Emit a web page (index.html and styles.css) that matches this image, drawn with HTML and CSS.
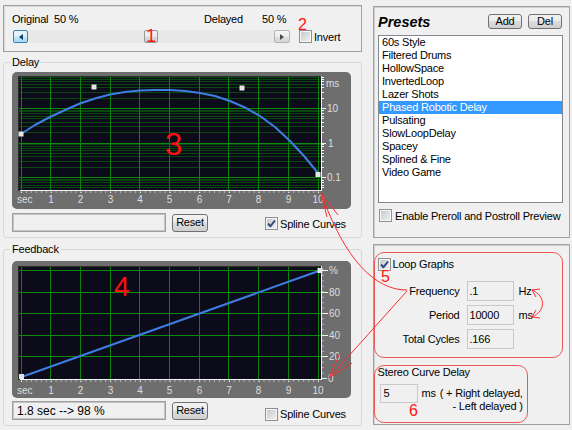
FILE: index.html
```html
<!DOCTYPE html>
<html>
<head>
<meta charset="utf-8">
<title>Delay</title>
<link rel="stylesheet" href="styles.css">
</head>
<body>
<div class="app">
  <div class="left">
    <div class="mixbox">
      <div class="mixrow">
        <span class="m-orig">Original</span><span class="m-ov">50 %</span><span class="m-del">Delayed</span><span>50 %</span>
      </div>
      <div class="sliderrow">
        <div class="scrollbar">
          <div class="sb-btn sb-left"><span class="tri-left"></span></div>
          <div class="sb-track"><div class="sb-thumb"></div></div>
          <div class="sb-btn sb-right"><span class="tri-right"></span></div>
        </div>
        <div class="check invert"><span class="cb"></span><span>Invert</span></div>
      </div>
      <span class="anno anno-1">1</span>
      <span class="anno anno-2">2</span>
    </div>

    <div class="group group-delay">
      <div class="group-title">Delay</div>
      <svg class="graph" width="339" height="137" viewBox="0 0 339 137">
        <rect class="g-panel" x="0" y="0" width="339" height="137" rx="5"/>
        <rect class="g-plot" x="6.5" y="4.5" width="303" height="114"/>
        <g class="g-minor">
          <line x1="7" x2="309" y1="5.5" y2="5.5"/><line x1="7" x2="309" y1="7.5" y2="7.5"/><line x1="7" x2="309" y1="9.5" y2="9.5"/><line x1="7" x2="309" y1="12.5" y2="12.5"/><line x1="7" x2="309" y1="15.5" y2="15.5"/><line x1="7" x2="309" y1="20.5" y2="20.5"/><line x1="7" x2="309" y1="26.5" y2="26.5"/>
          <line x1="7" x2="309" y1="38.5" y2="38.5"/><line x1="7" x2="309" y1="39.5" y2="39.5"/><line x1="7" x2="309" y1="41.5" y2="41.5"/><line x1="7" x2="309" y1="44.5" y2="44.5"/><line x1="7" x2="309" y1="46.5" y2="46.5"/><line x1="7" x2="309" y1="50.5" y2="50.5"/><line x1="7" x2="309" y1="54.5" y2="54.5"/><line x1="7" x2="309" y1="60.5" y2="60.5"/>
          <line x1="7" x2="309" y1="72.5" y2="72.5"/><line x1="7" x2="309" y1="74.5" y2="74.5"/><line x1="7" x2="309" y1="76.5" y2="76.5"/><line x1="7" x2="309" y1="78.5" y2="78.5"/><line x1="7" x2="309" y1="81.5" y2="81.5"/><line x1="7" x2="309" y1="84.5" y2="84.5"/><line x1="7" x2="309" y1="89.5" y2="89.5"/><line x1="7" x2="309" y1="95.5" y2="95.5"/>
          <line x1="7" x2="309" y1="107.5" y2="107.5"/><line x1="7" x2="309" y1="108.5" y2="108.5"/><line x1="7" x2="309" y1="110.5" y2="110.5"/><line x1="7" x2="309" y1="113.5" y2="113.5"/><line x1="7" x2="309" y1="115.5" y2="115.5"/>
        </g>
        <g class="g-major">
          <line x1="7" x2="309" y1="36.5" y2="36.5"/><line x1="7" x2="309" y1="71.5" y2="71.5"/><line x1="7" x2="309" y1="105.5" y2="105.5"/>
        </g>
        <g class="g-v">
          <line x1="9.5" x2="9.5" y1="5" y2="118"/><line x1="38.5" x2="38.5" y1="5" y2="118"/><line x1="68.5" x2="68.5" y1="5" y2="118"/><line x1="98.5" x2="98.5" y1="5" y2="118"/><line x1="127.5" x2="127.5" y1="5" y2="118"/><line x1="157.5" x2="157.5" y1="5" y2="118"/><line x1="187.5" x2="187.5" y1="5" y2="118"/><line x1="216.5" x2="216.5" y1="5" y2="118"/><line x1="246.5" x2="246.5" y1="5" y2="118"/><line x1="276.5" x2="276.5" y1="5" y2="118"/><line x1="306.5" x2="306.5" y1="5" y2="118"/>
        </g>
        <line class="g-axis" x1="8" y1="118.5" x2="310" y2="118.5"/>
        <line class="g-axis" x1="309.5" y1="4" x2="309.5" y2="119"/>
        <line class="g-axis" x1="9" y1="120" x2="307" y2="120" stroke-width="3" stroke-dasharray="1 3.95"/>
        <line class="g-axis" x1="9" y1="120.5" x2="307" y2="120.5" stroke-width="5" stroke-dasharray="1 28.7"/>
        <path class="g-axis" d="M310 5.5h2M310 7.5h2M310 9.5h2M310 12.5h2M310 15.5h2M310 20.5h2M310 26.5h2M310 38.5h2M310 41.5h2M310 44.5h2M310 46.5h2M310 50.5h2M310 54.5h2M310 60.5h2M310 72.5h2M310 74.5h2M310 78.5h2M310 81.5h2M310 84.5h2M310 89.5h2M310 95.5h2M310 108.5h2M310 110.5h2M310 113.5h2M310 115.5h2M310 36.5h4M310 71.5h4M310 105.5h4"/>
        <text class="g-lbl" x="5" y="131">sec</text>
        <g class="g-lbl g-mid">
          <text x="39" y="131">1</text><text x="68.5" y="131">2</text><text x="98.5" y="131">3</text><text x="128" y="131">4</text><text x="157.5" y="131">5</text><text x="187.5" y="131">6</text><text x="217" y="131">7</text><text x="246.5" y="131">8</text><text x="276.5" y="131">9</text><text x="306" y="131">10</text>
        </g>
        <text class="g-lbl" x="314" y="15">ms</text>
        <text class="g-lbl" x="315" y="40">10</text>
        <text class="g-lbl" x="316" y="75">1</text>
        <text class="g-lbl" x="315" y="109">0.1</text>
        <polyline class="g-curve" points="9,62 23,53 38,45 53,38 68,31.5 83,26.5 98,22.5 113,20 128,18.5 143,18 158,18 173,19 188,21 203,24 218,29 233,35.5 248,44 263,55 278,69 292,84 306,101"/>
        <rect class="g-pt" x="6.5" y="59.5" width="5" height="5"/>
        <rect class="g-pt" x="79.5" y="12.5" width="5" height="5"/>
        <rect class="g-pt" x="227.5" y="13.5" width="5" height="5"/>
        <rect class="g-pt" x="303.5" y="100" width="5" height="5"/>
        <text class="g-num g-num3" x="153" y="83">3</text>
      </svg>
      <div class="ctrlrow">
        <div class="textbox"></div>
        <div class="button">Reset</div>
        <div class="check spline"><span class="cb"><svg class="tick" width="11" height="11" viewBox="0 0 11 11"><path d="M2 5.5 L4.5 8.2 L9 2.5"/></svg></span><span>Spline Curves</span></div>
      </div>
    </div>

    <div class="group group-feedback">
      <div class="group-title">Feedback</div>
      <svg class="graph" width="339" height="137" viewBox="0 0 339 137">
        <rect class="g-panel" x="0" y="0" width="339" height="137" rx="5"/>
        <rect class="g-plot" x="6.5" y="5.5" width="303" height="113"/>
        <g class="g-major">
          <line x1="7" x2="309" y1="9.5" y2="9.5"/><line x1="7" x2="309" y1="31.5" y2="31.5"/><line x1="7" x2="309" y1="52.5" y2="52.5"/><line x1="7" x2="309" y1="74.5" y2="74.5"/><line x1="7" x2="309" y1="95.5" y2="95.5"/>
        </g>
        <g class="g-v">
          <line x1="9.5" x2="9.5" y1="6" y2="118"/><line x1="38.5" x2="38.5" y1="6" y2="118"/><line x1="68.5" x2="68.5" y1="6" y2="118"/><line x1="98.5" x2="98.5" y1="6" y2="118"/><line x1="127.5" x2="127.5" y1="6" y2="118"/><line x1="157.5" x2="157.5" y1="6" y2="118"/><line x1="187.5" x2="187.5" y1="6" y2="118"/><line x1="216.5" x2="216.5" y1="6" y2="118"/><line x1="246.5" x2="246.5" y1="6" y2="118"/><line x1="276.5" x2="276.5" y1="6" y2="118"/><line x1="306.5" x2="306.5" y1="6" y2="118"/>
        </g>
        <line class="g-axis" x1="8" y1="118.5" x2="310" y2="118.5"/>
        <line class="g-axis" x1="309.5" y1="5" x2="309.5" y2="119"/>
        <line class="g-axis" x1="9" y1="120" x2="307" y2="120" stroke-width="3" stroke-dasharray="1 3.95"/>
        <line class="g-axis" x1="9" y1="120.5" x2="307" y2="120.5" stroke-width="5" stroke-dasharray="1 28.7"/>
        <line class="g-axis" x1="311" y1="118" x2="311" y2="6" stroke-width="2" stroke-dasharray="1 4.42"/>
        <path class="g-axis" d="M310 9.5h6M310 31.5h6M310 52.5h6M310 74.5h6M310 95.5h6M310 117.5h5"/>
        <text class="g-lbl" x="5" y="133">sec</text>
        <g class="g-lbl g-mid">
          <text x="39" y="133">1</text><text x="68.5" y="133">2</text><text x="98.5" y="133">3</text><text x="128" y="133">4</text><text x="157.5" y="133">5</text><text x="187.5" y="133">6</text><text x="217" y="133">7</text><text x="246.5" y="133">8</text><text x="276.5" y="133">9</text><text x="306" y="133">10</text>
        </g>
        <text class="g-lbl" x="317" y="13">%</text>
        <text class="g-lbl" x="317" y="35">80</text>
        <text class="g-lbl" x="317" y="56">60</text>
        <text class="g-lbl" x="317" y="78">40</text>
        <text class="g-lbl" x="317" y="99">20</text>
        <text class="g-lbl" x="316" y="121">0</text>
        <line class="g-curve" x1="9.5" y1="116" x2="308" y2="9.5"/>
        <rect class="g-pt" x="7" y="113" width="5" height="5"/>
        <rect class="g-pt" x="305.5" y="7" width="5" height="5"/>
        <text class="g-num g-num4" x="102" y="35">4</text>
      </svg>
      <div class="ctrlrow">
        <div class="textbox">1.8 sec --&gt; 98 %</div>
        <div class="button">Reset</div>
        <div class="check spline spline-low"><span class="cb"></span><span>Spline Curves</span></div>
      </div>
    </div>
  </div>

  <div class="right">
    <div class="panel presets">
      <div class="p-head">
        <span class="p-title">Presets</span>
        <div class="button btn-small btn-add">Add</div>
        <div class="button btn-small btn-del">Del</div>
      </div>
      <div class="listbox">
        <div class="item">60s Style</div>
        <div class="item">Filtered Drums</div>
        <div class="item">HollowSpace</div>
        <div class="item">InvertedLoop</div>
        <div class="item">Lazer Shots</div>
        <div class="item sel">Phased Robotic Delay</div>
        <div class="item">Pulsating</div>
        <div class="item">SlowLoopDelay</div>
        <div class="item">Spacey</div>
        <div class="item">Splined &amp; Fine</div>
        <div class="item">Video Game</div>
      </div>
      <div class="check preroll"><span class="cb"></span><span>Enable Preroll and Postroll Preview</span></div>
    </div>

    <div class="panel loop">
      <div class="redbox r5">
        <div class="check loopcheck"><span class="cb"><svg class="tick" width="11" height="11" viewBox="0 0 11 11"><path d="M2 5.5 L4.5 8.2 L9 2.5"/></svg></span><span>Loop Graphs</span></div>
        <div class="loop-grid">
          <span class="lg-label">Frequency</span><div class="field">.1</div><span class="lg-unit">Hz</span>
          <span class="lg-label">Period</span><div class="field">10000</div><span class="lg-unit">ms</span>
          <span class="lg-label">Total Cycles</span><div class="field">.166</div><span class="lg-unit"></span>
        </div>
        <span class="anno anno-5">5</span>
      </div>
      <div class="redbox r6">
        <div class="sc-title">Stereo Curve Delay</div>
        <div class="sc-row">
          <div class="field sc-field">5</div>
          <span class="sc-ms">ms</span>
          <div class="sc-note">( + Right delayed,<br>- Left delayed )</div>
        </div>
        <span class="anno anno-6">6</span>
      </div>
    </div>
  </div>

  <svg class="overlay" width="572" height="430" viewBox="0 0 572 430">
    <path class="ann" d="M407,290 C375,290 345,260 321,193 M321,193 L338,215 M321,193 L327,217 M407,291 L329,378 M329,378 L340,353 M329,378 L352,363 M532,290 C546,296 546,311 532,317 M532,290 L540,289 M532,290 L536,297 M532,317 L540,318 M532,317 L536,310"/>
  </svg>
</div>
</body>
</html>
```
FILE: styles.css
```css
* { box-sizing: border-box; }
html, body { margin: 0; padding: 0; }
body {
  background: #f0f0f0;
  font-family: "Liberation Sans", Arial, sans-serif;
  font-size: 11px;
  letter-spacing: -0.2px;
  color: #000;
}
.app {
  position: relative;
  width: 572px;
  height: 430px;
  display: flex;
  overflow: hidden;
}
.left {
  margin-left: 3px;
  width: 359px;
  display: flex;
  flex-direction: column;
}
.right {
  margin-left: 11px;
  width: 197px;
  display: flex;
  flex-direction: column;
}

/* mix box */
.mixbox {
  position: relative;
  margin-top: 5px;
  height: 47px;
  border: 1px solid #a0a0a0;
  box-shadow: inset 1px 1px 0 #d8d8d8;
  padding: 7px 0 0 8px;
}
.mixrow { display: flex; height: 13px; line-height: 13px; white-space: nowrap; }
.m-orig { width: 42px; }
.m-ov { width: 150px; }
.m-del { width: 58px; }
.sliderrow {
  display: flex;
  align-items: center;
  height: 13px;
  margin-top: 4px;
  margin-left: 1px;
}
.scrollbar { display: flex; width: 277px; height: 13px; }
.sb-btn {
  height: 13px;
  border-radius: 2px;
  display: flex;
  align-items: center;
  justify-content: center;
}
.sb-left {
  width: 15px;
  border: 1px solid #3c7fb1;
  background: linear-gradient(#eaf6fd, #d9f0fc 50%, #bee6fd 51%, #a7d9f5);
}
.sb-right {
  width: 16px;
  border: 1px solid #b4b4b4;
  background: linear-gradient(#f6f6f6, #ececec 50%, #dedede 51%, #d4d4d4);
}
.tri-left {
  width: 0; height: 0;
  border-top: 3.5px solid transparent;
  border-bottom: 3.5px solid transparent;
  border-right: 4px solid #1d3b63;
}
.tri-right {
  width: 0; height: 0;
  border-top: 3.5px solid transparent;
  border-bottom: 3.5px solid transparent;
  border-left: 4px solid #4a4a4a;
}
.sb-track { flex: 1; background: #e8e8e8; display: flex; }
.sb-thumb {
  width: 14px;
  height: 13px;
  margin-left: 116px;
  border: 1px solid #979797;
  border-radius: 2px;
  background: linear-gradient(#f4f4f4, #eaeaea 50%, #dcdcdc 51%, #cfcfcf);
}
.invert { margin-left: 9px; }

.anno {
  position: absolute;
  color: #ff1414;
  letter-spacing: 0;
  font-family: "Liberation Sans", Arial, sans-serif;
}
.anno-1 { font-size: 18px; line-height: 18px; left: 142px; top: 21px; }
.anno-2 { font-size: 16px; line-height: 16px; left: 294px; top: 11px; }
.anno-5 { font-size: 16px; line-height: 16px; left: 6px; top: 15.5px; }
.anno-6 { font-size: 16px; line-height: 16px; left: 34px; top: 36.5px; }

/* check boxes */
.check { display: flex; align-items: center; gap: 2px; white-space: nowrap; }
.cb {
  flex: none;
  width: 13px;
  height: 13px;
  border: 1px solid #8e8f8f;
  background: linear-gradient(135deg, #c3c7cb, #f2f2f2);
  box-shadow: inset 0 0 0 1px #f7f7f7;
  display: flex;
  align-items: center;
  justify-content: center;
}
.tick path { fill: none; stroke: #34497d; stroke-width: 2; stroke-linejoin: round; }

/* groups */
.group {
  border: 1px solid #d5d9dc;
  border-radius: 3px;
}
.group-delay { margin-top: 10px; height: 176px; }
.group-feedback { margin-top: 11px; height: 177px; }
.group-title {
  margin: -7px 0 0 6px;
  padding: 0 2px;
  width: max-content;
  height: 13px;
  line-height: 13px;
  background: #f0f0f0;
}
.graph { display: block; margin-left: 8px; }
.group-delay .graph { margin-top: 3px; }
.group-feedback .graph { margin-top: 5px; }
.ctrlrow {
  display: flex;
  align-items: center;
  height: 19px;
  margin-left: 8px;
}
.group-delay .ctrlrow { margin-top: 4px; }
.group-feedback .ctrlrow { margin-top: 3px; }
.textbox {
  width: 154px;
  height: 19px;
  border: 1px solid #a0a0a0;
  box-shadow: inset 0 0 0 1px #c4c4c4;
  font-size: 12px;
  letter-spacing: 0;
  line-height: 15px;
  padding: 2px 0 0 4px;
  white-space: nowrap;
}
.button {
  width: 36px;
  height: 18px;
  margin-left: 6px;
  border: 1px solid #707070;
  border-radius: 3px;
  background: linear-gradient(#f3f3f3, #ebebeb 45%, #dddddd 50%, #cfcfcf);
  display: flex;
  align-items: center;
  justify-content: center;
  line-height: 1;
}
.spline { margin-left: 57px; margin-top: 2px; }
.spline-low { margin-top: 7px; }

/* graph svg */
.g-panel { fill: #6e6e6e; }
.g-plot { fill: #0b0b1a; stroke: #2a2a2a; stroke-width: 1; }
.g-minor line { stroke: #0b4510; stroke-width: 1; shape-rendering: crispEdges; }
.g-major line { stroke: #0b8a0b; stroke-width: 1; shape-rendering: crispEdges; }
.g-v line { stroke: #0b820b; stroke-width: 1; shape-rendering: crispEdges; }
.g-axis { stroke: #f2f2f2; fill: none; stroke-width: 1; }
.g-lbl { fill: #dedede; font-size: 10px; letter-spacing: 0; font-family: "Liberation Sans", Arial, sans-serif; }
.g-mid { text-anchor: middle; }
.g-curve { fill: none; stroke: #3f7de2; stroke-width: 2; stroke-linejoin: round; stroke-linecap: round; }
.g-pt { fill: #e4e4e4; }
.g-num { fill: #ff1010; font-family: "Liberation Sans", Arial, sans-serif; letter-spacing: 0; }
.g-num3 { font-size: 31px; }
.g-num4 { font-size: 28px; }

/* right panels */
.panel {
  border: 1px solid #a0a0a0;
  box-shadow: inset 1px 1px 0 #d0d0d0;
}
.presets {
  margin-top: 6px;
  height: 232px;
  padding: 7px 7px 0 4px;
}
.p-head { display: flex; height: 15px; align-items: flex-start; }
.p-title {
  font-weight: bold;
  font-style: italic;
  font-size: 14.5px;
  line-height: 16px;
  letter-spacing: 0;
}
.btn-small { width: 34px; height: 15px; }
.btn-add { margin-left: auto; }
.btn-del { margin-left: 6px; }
.listbox {
  margin-top: 6px;
  width: 185px;
  height: 168px;
  border: 1px solid #828790;
  background: #fff;
  overflow: hidden;
}
.item {
  height: 13px;
  line-height: 13px;
  padding-left: 3px;
  white-space: nowrap;
}
.item.sel { background: #3399ff; color: #fff; }
.preroll { margin-top: 6px; margin-left: 1px; gap: 3px; }

.loop {
  margin-top: 6px;
  height: 181px;
  padding-top: 7px;
}
.redbox {
  position: relative;
  border: 1.5px solid #ee5757;
  border-radius: 10px;
}
.r5 { width: 189px; height: 106px; padding: 4.5px 0 0 2.5px; }
.loopcheck { height: 13px; }
.loop-grid {
  display: grid;
  grid-template-columns: 84px 47px auto;
  grid-auto-rows: 20px;
  column-gap: 5px;
  row-gap: 4px;
  margin-top: 10px;
}
.lg-label { text-align: right; align-self: center; padding-right: 2px; white-space: nowrap; }
.lg-unit { align-self: center; }
.field {
  height: 20px;
  border: 1px solid #c9c9c9;
  background: #f0f0f0;
  padding-left: 2px;
  line-height: 18px;
  white-space: nowrap;
}
.r6 { margin-top: 7px; width: 154px; height: 58px; padding: 0 0 0 2.5px; }
.sc-title { line-height: 13px; white-space: nowrap; }
.sc-row { display: flex; align-items: flex-start; margin-top: 4.5px; }
.sc-field { width: 38px; height: 19px; margin-left: 2px; line-height: 17px; padding-left: 3px; }
.sc-ms { margin: 3.5px 0 0 4px; line-height: 13px; }
.sc-note { margin: 3.5px 0 0 4px; line-height: 13px; text-align: right; white-space: nowrap; }

.overlay {
  position: absolute;
  left: 0;
  top: 0;
  pointer-events: none;
}
.ann { fill: none; stroke: #ff2b2b; stroke-width: 1; }
```
